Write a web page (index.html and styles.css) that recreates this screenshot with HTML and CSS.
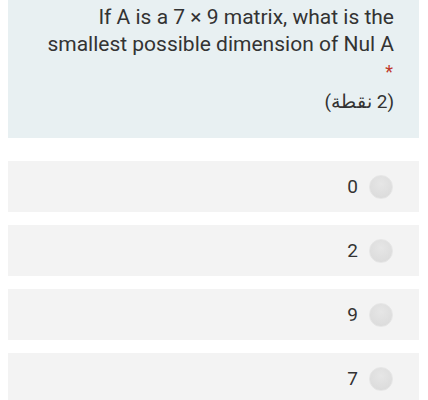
FILE: index.html
```html
<!DOCTYPE html>
<html lang="ar">
<head>
<meta charset="utf-8">
<link rel="stylesheet" href="styles.css">
</head>
<body>
<div class="page">
  <div class="question">
    <div class="title">If A is a 7 × 9 matrix, what is the smallest possible dimension of Nul A</div>
    <div class="req">*</div>
    <div class="points" dir="rtl">(2 نقطة)</div>
  </div>
  <div class="options">
    <div class="option"><span class="label">0</span><span class="radio"></span></div>
    <div class="option"><span class="label">2</span><span class="radio"></span></div>
    <div class="option"><span class="label">9</span><span class="radio"></span></div>
    <div class="option"><span class="label">7</span><span class="radio"></span></div>
  </div>
</div>
</body>
</html>
```
FILE: styles.css
```css
html, body {
  margin: 0;
  padding: 0;
  background: #ffffff;
}
body {
  font-family: Roboto, "Noto Sans", "Liberation Sans", sans-serif;
  color: #333333;
}
.page {
  padding: 0 9px 0 8px;
}
.question {
  background: #e8f0f2;
  padding: 4px 25px 24px 30px;
  text-align: right;
}
.title {
  font-size: 21px;
  line-height: 27px;
}
.req {
  color: #c0392b;
  font-size: 18px;
  line-height: 20px;
  margin-top: 4px;
  padding-right: 1px;
}
.points {
  font-family: Roboto, "Noto Sans", sans-serif;
  font-size: 19px;
  line-height: 24px;
  margin-top: 8px;
  text-align: right;
}
.options {
  display: flex;
  flex-direction: column;
  gap: 13px;
  margin-top: 23px;
}
.option {
  background: #f3f3f3;
  height: 51px;
  display: flex;
  align-items: center;
  justify-content: flex-end;
  padding-right: 26px;
  gap: 11px;
}
.label {
  font-size: 19px;
  color: #333333;
}
.radio {
  width: 22px;
  height: 22px;
  border-radius: 50%;
  border: 1px solid #e6e6e6;
  background: radial-gradient(circle at 50% 35%, #e6e6e6 0%, #dddddd 70%, #d8d8d8 100%);
}
```
